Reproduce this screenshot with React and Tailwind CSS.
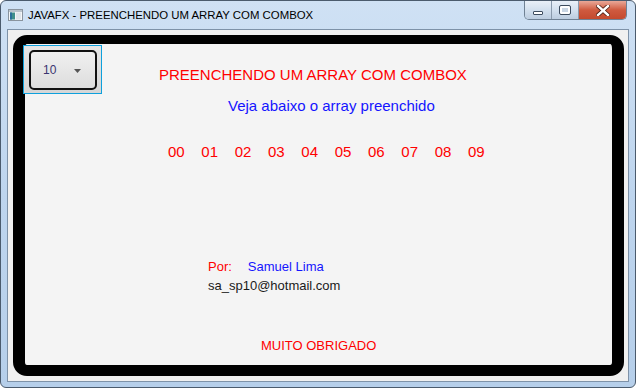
import React from 'react';

const numbers = ['00', '01', '02', '03', '04', '05', '06', '07', '08', '09'];

function WindowIcon() {
  return (
    <svg width="15" height="12" viewBox="0 0 15 12" className="mt-[8px] ml-[7px]">
      <rect x="0.5" y="0.5" width="14" height="11" fill="#f4f6f8" stroke="#8a949e" />
      <rect x="1" y="1" width="13" height="2" fill="#b9c3cc" />
      <rect x="2" y="3.5" width="5" height="7" fill="#3f8f8a" />
      <rect x="2" y="3.5" width="2" height="7" fill="#2a6f9a" />
      <rect x="8" y="3.5" width="5" height="7" fill="#dfe5ea" />
    </svg>
  );
}

function CaptionButtons() {
  return (
    <div className="ml-auto mr-[8px] flex h-[19px] rounded-b-[5px] border border-t-0 border-[#6f8194] overflow-hidden">
      <div className="w-[27px] flex items-center justify-center bg-gradient-to-b from-[#e9f0f8] via-[#d3e0ee] to-[#bccde0] border-r border-[#8a9aac]">
        <div className="w-[10px] h-[4px] mt-[5px] bg-white border border-[#3d4c5e] rounded-[1px]" />
      </div>
      <div className="w-[27px] flex items-center justify-center bg-gradient-to-b from-[#e9f0f8] via-[#d3e0ee] to-[#bccde0] border-r border-[#8a9aac]">
        <div className="w-[10px] h-[8px] border-[2px] border-white outline outline-1 outline-[#3d4c5e] rounded-[1px] bg-[#c9d6e4]" />
      </div>
      <div className="w-[47px] flex items-center justify-center bg-gradient-to-b from-[#e8a898] via-[#cf5a3f] to-[#c44a2e]">
        <svg width="14" height="11" viewBox="0 0 14 11">
          <path d="M2 1 L12 10 M12 1 L2 10" stroke="#4a1d12" strokeWidth="4" strokeLinecap="square" />
          <path d="M2 1 L12 10 M12 1 L2 10" stroke="#ffffff" strokeWidth="2.4" strokeLinecap="square" />
        </svg>
      </div>
    </div>
  );
}

function Combo() {
  return (
    <div className="relative z-10 -ml-[2px] mt-[1px] w-[79px] h-[49px] bg-[#0ea0dc] p-px">
      <div className="w-full h-full bg-gradient-to-b from-[#e6e6e6] to-[#d6d6d6] pl-[5px] pr-[4px] pt-[4px] pb-[3px]">
        <div className="w-full h-full rounded-[5px] border-2 border-[#111] bg-gradient-to-b from-[#f0f0f0] to-[#dddddd] flex items-center">
          <span className="ml-[12px] text-[12px] text-[#3a3470]">10</span>
          <svg width="7" height="4" viewBox="0 0 7 4" className="ml-[18px] mt-[1px]">
            <path d="M0 0 H7 L3.5 4 Z" fill="#555" />
          </svg>
        </div>
      </div>
    </div>
  );
}

export default function App() {
  return (
    <div className="w-[636px] h-[388px] overflow-hidden" style={{ fontFamily: '"Liberation Sans", Arial, sans-serif' }}>
      <div className="w-full h-full rounded-[6px] border border-[#4b5b6d] bg-gradient-to-b from-[#cfe1f4] via-[#bed5ee] to-[#b6cfea] flex flex-col">
        {/* title bar */}
        <div className="h-[28px] flex items-start">
          <WindowIcon />
          <span className="ml-[5px] mt-[7px] text-[11.4px] leading-[14px] text-black">
            JAVAFX - PREENCHENDO UM ARRAY COM COMBOX
          </span>
          <CaptionButtons />
        </div>

        {/* client area */}
        <div className="flex-1 mx-[6px] mb-[5px] border border-[#7e92a8] bg-[#f0f0f0] p-[5px] pr-[4px] flex">
          <div className="flex-1 rounded-[14px] border-black border-l-[12px] border-r-[12px] border-t-[9px] border-b-[11px] bg-[#f4f4f4] flex flex-col">
            <div className="flex items-start">
              <Combo />
              <div className="ml-[57px] mt-[22px] text-[15px] leading-[17px] text-[#ff0000]">
                PREENCHENDO UM ARRAY COM COMBOX
              </div>
            </div>

            <div className="ml-[203px] mt-[3px] text-[15px] leading-[17px] text-[#1515ff]">
              Veja abaixo o array preenchido
            </div>

            <div className="ml-[143px] mt-[29px] flex gap-[16.65px] text-[15px] leading-[17px] text-[#ff0000]">
              {numbers.map(n => (
                <span key={n}>{n}</span>
              ))}
            </div>

            <div className="ml-[183px] mt-[97px] flex text-[13px] leading-[19px]">
              <span className="text-[#ff0000]">Por:</span>
              <span className="ml-[16px] text-[#1515ff]">Samuel Lima</span>
            </div>
            <div className="ml-[183px] text-[13px] leading-[19px] text-[#1a1a1a]">sa_sp10@hotmail.com</div>

            <div className="ml-[236px] mt-[41px] text-[13px] leading-[19px] text-[#ff0000]">MUITO OBRIGADO</div>
          </div>
        </div>
      </div>
    </div>
  );
}
